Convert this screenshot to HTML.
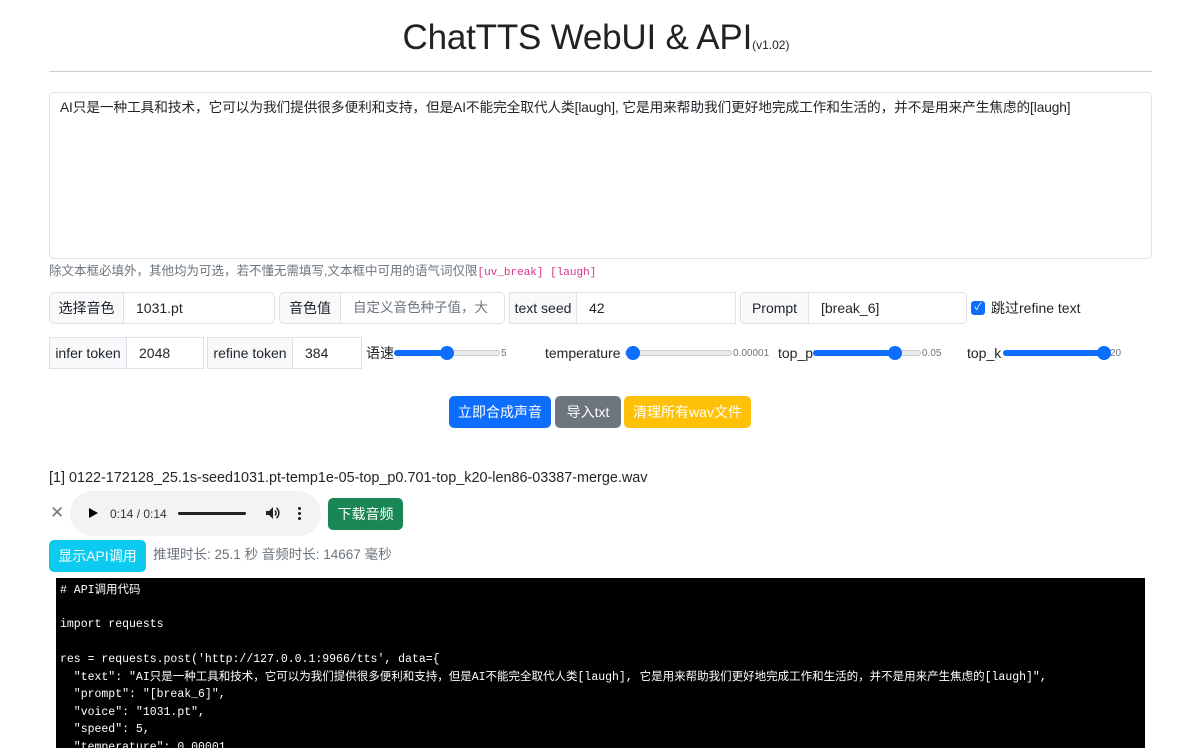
<!DOCTYPE html>
<html><head><meta charset="utf-8"><style>
*{box-sizing:border-box;margin:0;padding:0}
body{width:1192px;height:746px;overflow:hidden;background:#fff;font-family:"Liberation Sans","Noto Sans CJK SC",sans-serif;color:#212529;position:relative}
.a{position:absolute}
.t{white-space:nowrap;line-height:18px}
.lbl{position:absolute;background:#f8f9fa;border:1px solid #dee2e6;font-size:14px;line-height:18px;display:flex;align-items:center;justify-content:center;height:32px}
.inp{position:absolute;background:#fff;border:1px solid #dee2e6;font-size:14px;line-height:18px;display:flex;align-items:center;padding-left:12px;height:32px}
.sl{position:absolute;height:6px;border-radius:3px;background:#e9ecef;border:1px solid #ccc}
.sl i{position:absolute;left:-1px;top:-1px;height:6px;border-radius:3px;background:#0d6efd}
.sl b{position:absolute;top:-5px;width:14px;height:14px;border-radius:50%;background:#0d6efd}
.sm{position:absolute;font-size:10px;line-height:12px;color:#6c757d}
.btn{position:absolute;color:#fff;font-size:14px;line-height:18px;border-radius:5px;display:flex;align-items:center;justify-content:center}
.code{position:absolute;left:56px;top:578px;width:1089px;height:170px;background:#000;color:#fff;font-family:"Liberation Mono","Noto Sans CJK SC",monospace;font-size:11.5px}
.code div{position:absolute;left:4px;white-space:pre;line-height:14px}
</style></head><body>
<div class="a t" style="left:0;width:1192px;top:18px;line-height:40px;text-align:center;font-size:35px;color:#222;letter-spacing:-0.2px">ChatTTS WebUI &amp; API<span style="font-size:12px;letter-spacing:0">(v1.02)</span></div>
<div class="a" style="left:49px;top:71px;width:1103px;height:1px;background:#ccc"></div>
<div class="a" style="left:49px;top:92px;width:1103px;height:167px;border:1px solid #dee2e6;border-radius:5px"></div>
<div class="a t" style="left:60px;top:99px;font-size:13.7px;letter-spacing:-0.1px">AI只是一种工具和技术，它可以为我们提供很多便利和支持，但是AI不能完全取代人类[laugh], 它是用来帮助我们更好地完成工作和生活的，并不是用来产生焦虑的[laugh]</div>
<div class="a t" style="left:49px;top:262px;font-size:12.5px;color:#6c757d">除文本框必填外，其他均为可选，若不懂无需填写,文本框中可用的语气词仅限<span style="font-family:'Liberation Mono',monospace;font-size:11px;color:#d63384">[uv_break] [laugh]</span></div>

<div class="lbl" style="left:49px;top:292px;width:75px;border-radius:5px 0 0 5px">选择音色</div>
<div class="inp" style="left:123px;top:292px;width:152px;border-radius:0 5px 5px 0">1031.pt</div>
<div class="lbl" style="left:279px;top:292px;width:62px;border-radius:5px 0 0 5px">音色值</div>
<div class="inp" style="left:340px;top:292px;width:165px;border-radius:0 5px 5px 0;color:#6c757d;font-size:13.5px">自定义音色种子值，大</div>
<div class="lbl" style="left:509px;top:292px;width:68px">text seed</div>
<div class="inp" style="left:576px;top:292px;width:160px">42</div>
<div class="lbl" style="left:740px;top:292px;width:69px;border-radius:5px 0 0 5px">Prompt</div>
<div class="inp" style="left:808px;top:292px;width:159px;border-radius:0 5px 5px 0">[break_6]</div>
<div class="a" style="left:971px;top:301px;width:14px;height:14px;background:#0d6efd;border-radius:3px;color:#fff;font-size:10px;text-align:center;line-height:14px">✓</div>
<div class="a t" style="left:991px;top:299px;font-size:14px">跳过refine text</div>

<div class="lbl" style="left:49px;top:337px;width:78px">infer token</div>
<div class="inp" style="left:126px;top:337px;width:78px">2048</div>
<div class="lbl" style="left:207px;top:337px;width:86px">refine token</div>
<div class="inp" style="left:292px;top:337px;width:70px">384</div>
<div class="a t" style="left:366px;top:344px;font-size:14px">语速</div>
<div class="sl" style="left:394px;top:350px;width:106px"><i style="width:52px"></i><b style="left:45px"></b></div>
<div class="sm" style="left:501px;top:348px">5</div>
<div class="a t" style="left:545px;top:344px;font-size:14px">temperature</div>
<div class="sl" style="left:625px;top:350px;width:107px"><b style="left:0"></b></div>
<div class="sm" style="left:733px;top:348px">0.00001</div>
<div class="a t" style="left:778px;top:344px;font-size:14px">top_p</div>
<div class="sl" style="left:813px;top:350px;width:108px"><i style="width:80px"></i><b style="left:74px"></b></div>
<div class="sm" style="left:922px;top:348px">0.05</div>
<div class="a t" style="left:967px;top:344px;font-size:14px">top_k</div>
<div class="sl" style="left:1003px;top:350px;width:106px"><i style="width:100px"></i><b style="left:93px"></b></div>
<div class="sm" style="left:1110px;top:348px">20</div>

<div class="btn" style="left:449px;top:396px;width:102px;height:32px;background:#0d6efd">立即合成声音</div>
<div class="btn" style="left:555px;top:396px;width:66px;height:32px;background:#6c757d">导入txt</div>
<div class="btn" style="left:624px;top:396px;width:127px;height:32px;background:#ffc107">清理所有wav文件</div>

<div class="a t" style="left:49px;top:469px;font-size:14.4px">[1] 0122-172128_25.1s-seed1031.pt-temp1e-05-top_p0.701-top_k20-len86-03387-merge.wav</div>
<div class="a" style="left:50px;top:503px;font-size:17px;color:#777">✕</div>
<div class="a" style="left:70px;top:491px;width:251px;height:45px;border-radius:23px;background:#f1f3f4"></div>
<div class="a" style="left:89px;top:508px;width:0;height:0;border-left:9px solid #000;border-top:5.5px solid transparent;border-bottom:5.5px solid transparent"></div>
<div class="a t" style="left:110px;top:505px;font-size:12px;color:#333">0:14 / 0:14</div>
<div class="a" style="left:178px;top:512px;width:68px;height:3px;background:#222;border-radius:2px"></div>
<svg class="a" style="left:265px;top:506px" width="16" height="14" viewBox="0 0 16 14"><path d="M1 5h3l4-4v12l-4-4H1z" fill="#222"/><path d="M10 4.5a3.5 3.5 0 0 1 0 5" stroke="#222" stroke-width="1.5" fill="none"/><path d="M11.5 2a6.5 6.5 0 0 1 0 10" stroke="#222" stroke-width="1.5" fill="none"/></svg>
<div class="a" style="left:298px;top:506px;width:3px;height:14px;background:radial-gradient(circle,#222 1.4px,transparent 1.6px) 0 0/3px 5px"></div>
<div class="btn" style="left:328px;top:498px;width:75px;height:32px;background:#198754">下载音频</div>
<div class="btn" style="left:49px;top:540px;width:97px;height:32px;background:#0dcaf0">显示API调用</div>
<div class="a t" style="left:153px;top:546px;font-size:13.5px;color:#6c757d">推理时长: 25.1 秒 音频时长: 14667 毫秒</div>

<div class="code">
<div style="top:6px"># API调用代码</div>
<div style="top:40px">import requests</div>
<div style="top:75px">res = requests.post('http://127.0.0.1:9966/tts', data={</div>
<div style="top:93px">  "text": "AI只是一种工具和技术，它可以为我们提供很多便利和支持，但是AI不能完全取代人类[laugh], 它是用来帮助我们更好地完成工作和生活的，并不是用来产生焦虑的[laugh]",</div>
<div style="top:110px">  "prompt": "[break_6]",</div>
<div style="top:128px">  "voice": "1031.pt",</div>
<div style="top:145px">  "speed": 5,</div>
<div style="top:163px">  "temperature": 0.00001,</div>
</div>
</body></html>
